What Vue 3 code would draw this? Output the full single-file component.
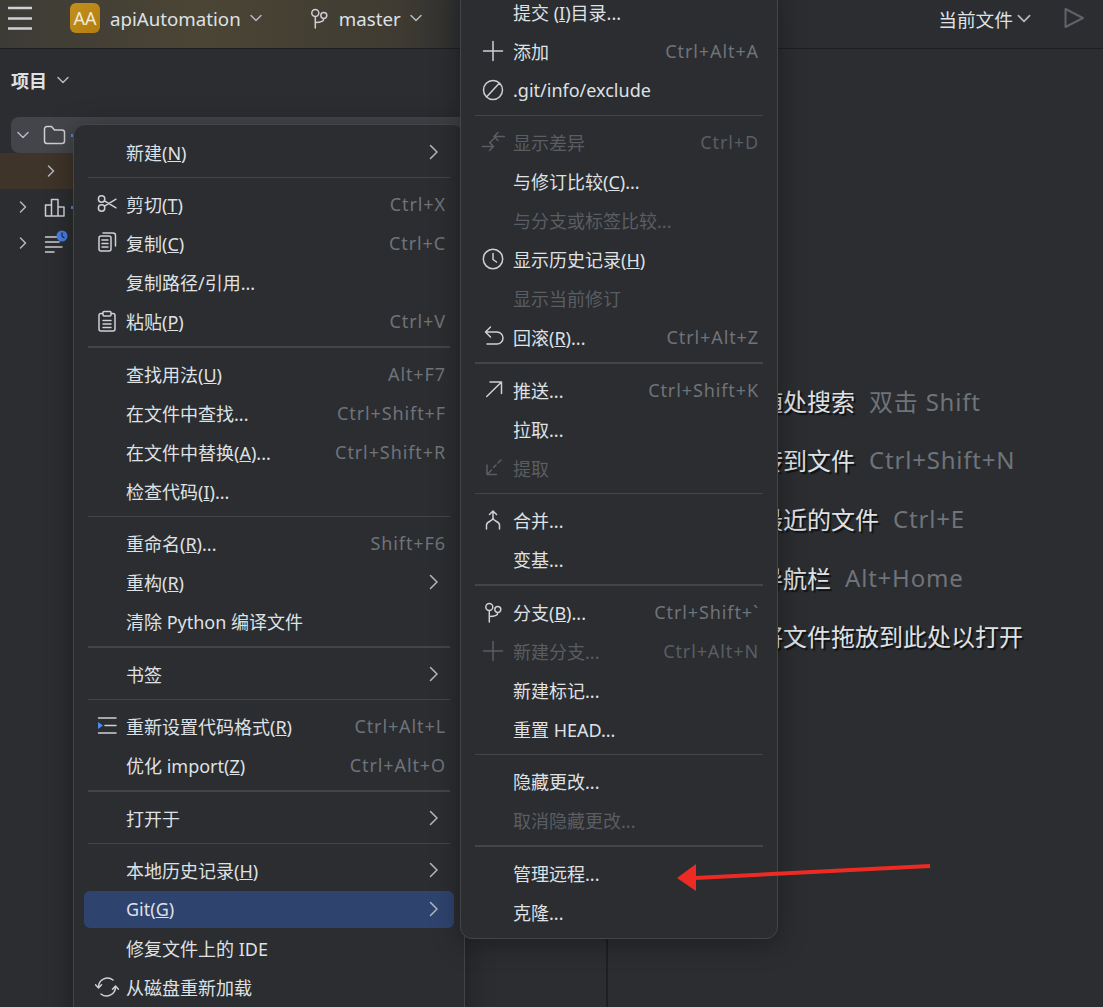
<script setup>
const circle = (x, y, r) => `M${x - r} ${y}a${r} ${r} 0 1 0 ${r * 2} 0a${r} ${r} 0 1 0 ${-r * 2} 0`;

const icons = {
  cut: circle(6.6, 7, 3.2) + circle(6.6, 16, 3.2) + 'M9.5 8.8L21 15.8M9.5 14.2L21 7.2',
  copy: 'M6 5h8a2 2 0 0 1 2 2v11a2 2 0 0 1-2 2H6a2 2 0 0 1-2-2V7a2 2 0 0 1 2-2zM8 2h10a2.5 2.5 0 0 1 2.5 2.5V15M7 9h6M7 12.5h6M7 16h6',
  paste: 'M8 4.5H6a2 2 0 0 0-2 2V20a2 2 0 0 0 2 2h12a2 2 0 0 0 2-2V6.5a2 2 0 0 0-2-2h-2M9 2.5h6a1 1 0 0 1 1 1V6a1 1 0 0 1-1 1H9a1 1 0 0 1-1-1V3.5a1 1 0 0 1 1-1zM8 11.5h8M8 15h8M8 18.5h8',
  plus: 'M12 2.5V21.5M2.5 12H21.5',
  no: circle(12, 12, 9.5) + 'M5.5 19L18.5 5',
  diff: 'M23.5 6.5H13M17 2.5L13 6.5L17 10.5M1.5 16.5H12.5M8.5 12.5L12.5 16.5L8.5 20.5M9.5 12L13 8.5',
  clock: circle(12, 12, 9.7) + 'M12 6.5V12.5L15.5 15',
  rollback: 'M4.5 7H16a6 6 0 0 1 0 12H6M9.5 2L4.5 7L9.5 12',
  push: 'M5.7 18.5L20.5 4M9 4H20.5V15.5',
  fetch: 'M6 9V18.5H15.5M6 18.5L10.5 14M12.5 11.5L15 9M17 7L20 4',
  merge: 'M12 3V10M8.5 6.5L12 3L15.5 6.5M5.5 21V17C5.5 13 12 13.5 12 10C12 13.5 18.5 13 18.5 17V21',
  branch: circle(8.3, 7, 3.5) + circle(16.8, 9.5, 3) + 'M8.3 10.5V22M16.8 12.5C16.8 15.5 12 16.5 8.3 16.5',
  format: 'M3.5 4H21M10 11.5H21M3.5 19H21',
  reload: 'M3.5 12.5A9 9 0 0 1 18 5M0.5 9.8L3.5 13L6.5 9.8M20.5 11.5A9 9 0 0 1 6 19M17.5 14.2L20.5 11L23.5 14.2',
};

const leftMenu = [
  { label: '新建(_N_)', sub: true },
  { sep: true },
  { label: '剪切(_T_)', icon: 'cut', key: 'Ctrl+X' },
  { label: '复制(_C_)', icon: 'copy', key: 'Ctrl+C' },
  { label: '复制路径/引用...' },
  { label: '粘贴(_P_)', icon: 'paste', key: 'Ctrl+V' },
  { sep: true, thick: true },
  { label: '查找用法(_U_)', key: 'Alt+F7' },
  { label: '在文件中查找...', key: 'Ctrl+Shift+F' },
  { label: '在文件中替换(_A_)...', key: 'Ctrl+Shift+R' },
  { label: '检查代码(_I_)...' },
  { sep: true },
  { label: '重命名(_R_)...', key: 'Shift+F6' },
  { label: '重构(_R_)', sub: true },
  { label: '清除 Python 编译文件' },
  { sep: true, thick: true },
  { label: '书签', sub: true },
  { sep: true },
  { label: '重新设置代码格式(_R_)', icon: 'format', key: 'Ctrl+Alt+L' },
  { label: '优化 import(_Z_)', key: 'Ctrl+Alt+O' },
  { sep: true, thick: true },
  { label: '打开于', sub: true },
  { sep: true },
  { label: '本地历史记录(_H_)', sub: true },
  { label: 'Git(_G_)', sub: true, selected: true },
  { label: '修复文件上的 IDE' },
  { label: '从磁盘重新加载', icon: 'reload' },
];

const gitMenu = [
  { label: '提交 (_I_)目录...' },
  { label: '添加', icon: 'plus', key: 'Ctrl+Alt+A' },
  { label: '.git/info/exclude', icon: 'no' },
  { sep: true },
  { label: '显示差异', icon: 'diff', key: 'Ctrl+D', off: true },
  { label: '与修订比较(_C_)...' },
  { label: '与分支或标签比较...', off: true },
  { label: '显示历史记录(_H_)', icon: 'clock' },
  { label: '显示当前修订', off: true },
  { label: '回滚(_R_)...', icon: 'rollback', key: 'Ctrl+Alt+Z' },
  { sep: true, thick: true },
  { label: '推送...', icon: 'push', key: 'Ctrl+Shift+K' },
  { label: '拉取...' },
  { label: '提取', icon: 'fetch', off: true },
  { sep: true },
  { label: '合并...', icon: 'merge' },
  { label: '变基...' },
  { sep: true, thick: true },
  { label: '分支(_B_)...', icon: 'branch', key: 'Ctrl+Shift+`' },
  { label: '新建分支...', icon: 'plus', key: 'Ctrl+Alt+N', off: true },
  { label: '新建标记...' },
  { label: '重置 HEAD...' },
  { sep: true },
  { label: '隐藏更改...' },
  { label: '取消隐藏更改...', off: true },
  { sep: true, thick: true },
  { label: '管理远程...' },
  { label: '克隆...' },
];

const menus = [
  { cls: 'menu-left', items: leftMenu },
  { cls: 'menu-git', items: gitMenu },
];

const hints = [
  { text: '随处搜索', key: '双击 Shift' },
  { text: '转到文件', key: 'Ctrl+Shift+N' },
  { text: '最近的文件', key: 'Ctrl+E' },
  { text: '导航栏', key: 'Alt+Home' },
  { text: '将文件拖放到此处以打开' },
];
</script>

<template>
  <div class="ide">
    <header class="topbar">
      <svg class="burger" viewBox="0 0 24 24"><path d="M0 2H24M0 12.500H24M0 22.500H24" /></svg>
      <div class="badge">AA</div>
      <span class="project">apiAutomation</span>
      <svg class="chev project-chev" viewBox="0 0 12 8"><path d="M1 1.500L6 6.500L11 1.500" /></svg>
      <svg class="ic head-branch" viewBox="0 0 24 24"><path :d="icons.branch" /></svg>
      <span class="branch-name">master</span>
      <svg class="chev branch-chev" viewBox="0 0 12 8"><path d="M1 1.500L6 6.500L11 1.500" /></svg>
      <span class="run-target">当前文件</span>
      <svg class="chev run-chev" viewBox="0 0 12 8"><path d="M1 1.500L6 6.500L11 1.500" /></svg>
      <svg class="play" viewBox="0 0 20 22"><path d="M1.500 2V20L19 11Z" /></svg>
    </header>

    <div class="body">
      <aside class="sidebar">
        <div class="panel-title">
          <b>项目</b>
          <svg class="chev" viewBox="0 0 12 8"><path d="M1 1.500L6 6.500L11 1.500" /></svg>
        </div>
        <div class="tree">
          <div class="row row-active">
            <svg class="arrow" viewBox="0 0 12 12"><path d="M1 3.500L6 8.500L11 3.500" /></svg>
            <svg class="ic" viewBox="0 0 24 24"><path d="M2.500 6A2.500 2.500 0 0 1 5 3.500H9.500L12.500 7H20A2.500 2.500 0 0 1 22.500 9.500V18A2.500 2.500 0 0 1 20 20.500H5A2.500 2.500 0 0 1 2.500 18Z" /></svg>
            <i class="speck"></i>
          </div>
          <div class="row row-brown">
            <svg class="arrow" viewBox="0 0 12 12"><path d="M3.500 1L8.500 6L3.500 11" /></svg>
          </div>
          <div class="row">
            <svg class="arrow" viewBox="0 0 12 12"><path d="M3.500 1L8.500 6L3.500 11" /></svg>
            <svg class="ic" viewBox="0 0 24 24"><path d="M3.500 10H9.500V21H3.500ZM9.500 4.500H16V21H9.500ZM16 12H22V21H16Z" /></svg>
            <i class="speck"></i>
          </div>
          <div class="row">
            <svg class="arrow" viewBox="0 0 12 12"><path d="M3.500 1L8.500 6L3.500 11" /></svg>
            <span class="scratch">
              <svg class="ic" viewBox="0 0 24 24"><path d="M3.500 6H15M3.500 11H17M3.500 16H20M3.500 21H12" /></svg>
              <svg class="clock-dot" viewBox="0 0 12 12">
                <circle cx="6" cy="6" r="5.500" />
                <path d="M6 2.800V6.300L8 7.800" />
              </svg>
            </span>
          </div>
        </div>
      </aside>

      <main class="editor">
        <div v-for="hint in hints" :key="hint.text" class="hint">
          <span class="hint-text">{{ hint.text }}</span>
          <span v-if="hint.key" class="hint-key">{{ hint.key }}</span>
        </div>
      </main>
    </div>

    <!-- popup menus, the git one opens over the first -->
    <div v-for="menu in menus" :key="menu.cls" class="menu" :class="menu.cls">
      <template v-for="(item, i) in menu.items" :key="i">
        <div v-if="item.sep" class="sep" :class="{ thick: item.thick }"></div>
        <div v-else class="item" :class="{ selected: item.selected, off: item.off }">
          <svg v-if="item.icon" class="ic item-icon" viewBox="0 0 24 24">
            <path :d="icons[item.icon]" />
            <path v-if="item.icon === 'format'" class="blue" d="M3 8L8 11.500L3 15Z" />
          </svg>
          <span v-else class="item-icon"></span>
          <span class="label">
            <template v-for="(part, p) in item.label.split('_')" :key="p">
              <u v-if="p % 2">{{ part }}</u><template v-else>{{ part }}</template>
            </template>
          </span>
          <span v-if="item.key" class="key">{{ item.key }}</span>
          <svg v-if="item.sub" class="sub" viewBox="0 0 10 16"><path d="M1.500 1.500L8 8L1.500 14.500" /></svg>
        </div>
      </template>
    </div>

    <svg class="red-arrow" viewBox="0 0 260 34">
      <path d="M19 19L254 7" />
      <polygon points="1,19 20,5 20,32" />
    </svg>
  </div>
</template>

<style>
html,
body {
  background: #2b2d30;
}
</style>

<style scoped>
.ide {
  position: relative;
  width: 1103px;
  height: 1007px;
  overflow: hidden;
  background: #2b2d30;
  color: #dfe1e5;
  font-family: "Noto Sans", "Noto Sans CJK SC", sans-serif;
  font-size: 18px;
}

svg path {
  fill: none;
  stroke-linecap: round;
  stroke-linejoin: round;
}

.topbar {
  display: flex;
  align-items: center;
  box-sizing: border-box;
  height: 49px;
  padding-bottom: 12px;
  border-bottom: 1px solid #1e1f22;
  background: linear-gradient(90deg, #3d3b36 0, #4b4535 200px, #3f3b32 400px, #2b2d30 470px);
  font-size: 18.700px;
}

.burger {
  width: 24px;
  height: 24px;
  margin-left: 8px;
}

.burger path {
  stroke: #ced0d6;
  stroke-width: 2.500;
  stroke-linecap: butt;
}

.badge {
  display: flex;
  align-items: center;
  justify-content: center;
  width: 30px;
  height: 30px;
  margin-left: 38px;
  border-radius: 6px;
  background: linear-gradient(135deg, #c38f1d, #b27f10);
  color: #f3ead4;
  font-size: 18px;
}

.project {
  margin-left: 10px;
}

.chev {
  width: 12px;
  height: 8px;
}

.chev path {
  stroke: #b4b8bf;
  stroke-width: 1.500;
}

.project-chev {
  margin-left: 9px;
}

.head-branch {
  margin-left: 45px;
}

.branch-name {
  margin-left: 8px;
}

.branch-chev {
  margin-left: 9px;
}

.run-target {
  margin-left: auto;
}

.run-chev {
  width: 14px;
  height: 9px;
  margin-left: 4px;
}

.play {
  width: 20px;
  height: 22px;
  margin: 0 19px 0 33px;
}

.play path {
  stroke: #5f6268;
  stroke-width: 2;
}

.ic {
  flex: none;
  width: 24px;
  height: 24px;
}

.ic path {
  stroke: #ced0d6;
  stroke-width: 1.500;
}

.body {
  display: flex;
  height: 958px;
}

.sidebar {
  width: 606px;
  border-right: 2px solid #1e1f22;
  background: #2b2d30;
}

.panel-title {
  display: flex;
  align-items: center;
  gap: 10px;
  height: 36px;
  margin-top: 13px;
  padding-left: 11px;
}

.panel-title b {
  color: #dfe1e5;
  font-weight: 700;
}

.tree {
  margin-top: 19px;
}

.row {
  display: flex;
  align-items: center;
  height: 36px;
  padding-left: 17px;
}

.row-active {
  margin-left: 11px;
  padding-left: 6px;
  border-radius: 8px 0 0 8px;
  background: #43454a;
}

.row-brown {
  padding-left: 45px;
  background: #3e3429;
}

.arrow {
  flex: none;
  width: 12px;
  height: 12px;
  margin-right: 13px;
}

.arrow path {
  stroke: #b4b8bf;
  stroke-width: 1.500;
}

.scratch {
  position: relative;
  display: flex;
}

.clock-dot {
  position: absolute;
  top: -1px;
  left: 14px;
  width: 12px;
  height: 12px;
}

.clock-dot circle {
  fill: #4a7ee8;
}

.clock-dot path {
  stroke: #1e2a44;
  stroke-width: 1.200;
}

.speck {
  width: 2px;
  height: 3px;
  margin-left: 5px;
  background: #5a86c8;
}

.editor {
  flex: 1;
  padding: 322.500px 0 0 151px;
  font-size: 24px;
}

.hint {
  display: flex;
  align-items: center;
  gap: 14px;
  height: 58.750px;
  white-space: nowrap;
}

.hint-text {
  color: #dfe1e5;
  text-shadow: 2px 2px 1px #111214;
}

.hint-key {
  color: #6f737a;
  letter-spacing: 0.800px;
}

.menu {
  position: absolute;
  box-sizing: border-box;
  border: 1px solid #43454a;
  border-radius: 12px;
  background: #2b2d30;
  box-shadow: 0 4px 28px rgba(0, 0, 0, 0.35);
}

.menu-left {
  top: 124px;
  left: 73px;
  width: 392px;
  padding: 7px 0 40px;
}

.menu-git {
  top: -16px;
  left: 460px;
  width: 318px;
  height: 955px;
  padding-top: 7px;
}

.item {
  display: flex;
  align-items: center;
  height: 39px;
  margin: 0 10px;
  padding: 0 8px 0 11px;
  white-space: nowrap;
}

.menu-git .item {
  padding-left: 10px;
}

.item.selected {
  height: 37px;
  margin-top: 1px;
  margin-bottom: 1px;
  border-radius: 6px;
  background: #2e436e;
}

.item-icon {
  flex: none;
  width: 24px;
  height: 24px;
  margin-right: 7px;
}

.menu-git .item-icon {
  margin-right: 8px;
}

.ic path.blue {
  fill: #4a8cf0;
  stroke: none;
}

.key {
  margin-left: auto;
  color: #6f737a;
  letter-spacing: 0.900px;
}

.sub {
  flex: none;
  width: 10px;
  height: 16px;
  margin-left: auto;
  margin-right: 7px;
}

.sub path {
  stroke: #b4b8bf;
  stroke-width: 1.500;
}

.off .label,
.off .key {
  color: #5a5d63;
}

.off .ic path {
  stroke: #5a5d63;
}

.sep {
  display: flex;
  align-items: center;
  height: 13.500px;
  margin: 0 14px;
}

.sep::before {
  content: "";
  flex: 1;
  height: 1px;
  background: #43454a;
}

.sep.thick::before {
  height: 2px;
}

.red-arrow {
  position: absolute;
  top: 859px;
  left: 676px;
  width: 260px;
  height: 34px;
}

.red-arrow path {
  stroke: #ee2a24;
  stroke-width: 4;
  stroke-linecap: butt;
}

.red-arrow polygon {
  fill: #ee2a24;
}
</style>
